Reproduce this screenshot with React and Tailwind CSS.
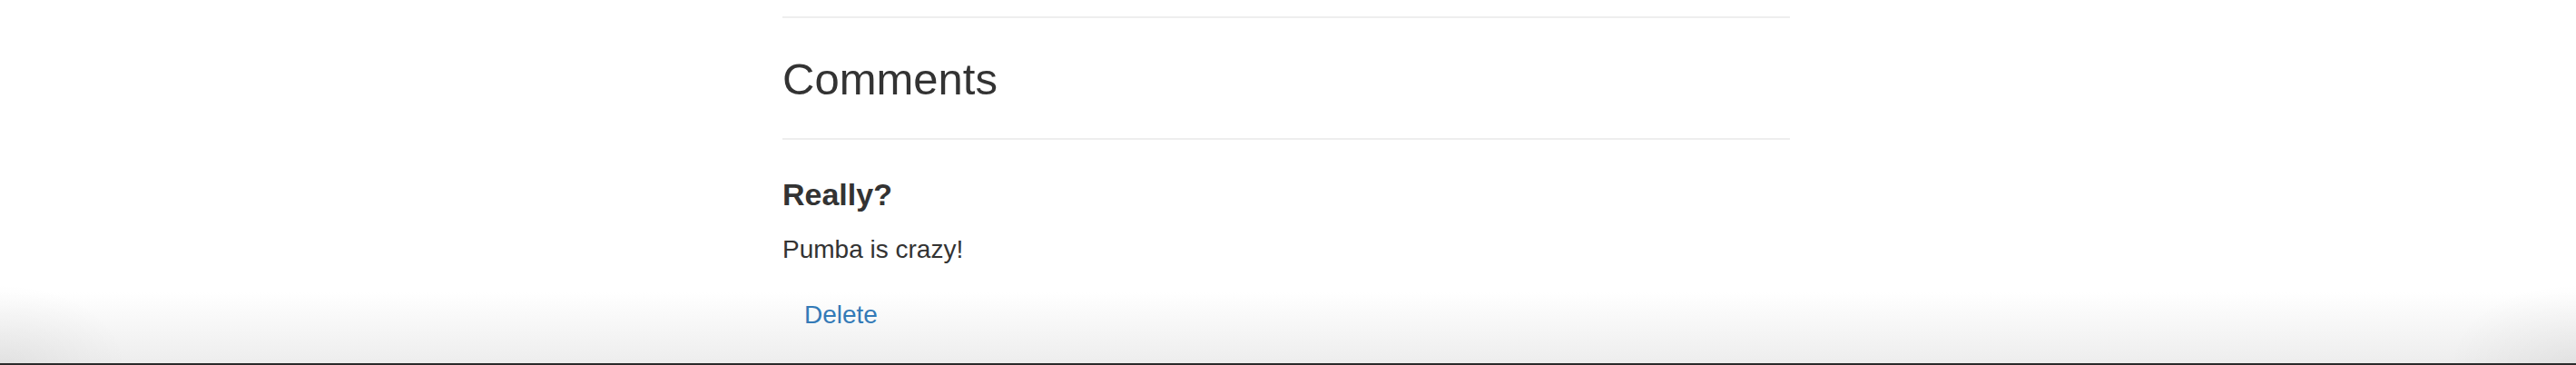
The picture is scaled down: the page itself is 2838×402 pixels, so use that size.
// App.jsx — comments section of a post page

const comments = [
    { id: 1, title: 'Really?', body: 'Pumba is crazy!' },
];

function Comment({ comment }) {
    return (
        <div>
            <h4 className="mt-[41px] text-[34px] leading-[38px] font-bold text-[#333333]">
                {comment.title}
            </h4>
            <p className="mt-[22px] text-[28px] leading-[40px] text-[#333333]">
                {comment.body}
            </p>
            <button className="mt-[32px] pl-[24px] text-[28px] leading-[40px] text-[#337ab7]
                               hover:underline">
                Delete
            </button>
        </div>
    );
}

export default function App() {
    return (
        <div className="w-full h-[402px] flex flex-col overflow-hidden
                        font-['Liberation_Sans','Helvetica_Neue',Arial,sans-serif]
                        bg-[radial-gradient(ellipse_140px_90px_at_0%_100%,rgba(0,0,0,0.05),transparent),radial-gradient(ellipse_140px_90px_at_100%_100%,rgba(0,0,0,0.05),transparent),linear-gradient(to_bottom,#ffffff_322px,#ededed_400px)]">
            <div className="flex-1">
                <div className="w-[1114px] mx-auto pr-[4px]">
                    <div className="mt-[18px] border-t-2 border-[#eeeeee]" />
                    <h3 className="mt-[40px] text-[49px] leading-[54px] text-[#333333]">
                        Comments
                    </h3>
                    <div className="mt-[38px] border-t-2 border-[#eeeeee]" />
                    {comments.map((c) => (
                        <Comment key={c.id} comment={c} />
                    ))}
                </div>
            </div>
            <div className="h-[2px] bg-[#2b2b2b]" />
        </div>
    );
}
